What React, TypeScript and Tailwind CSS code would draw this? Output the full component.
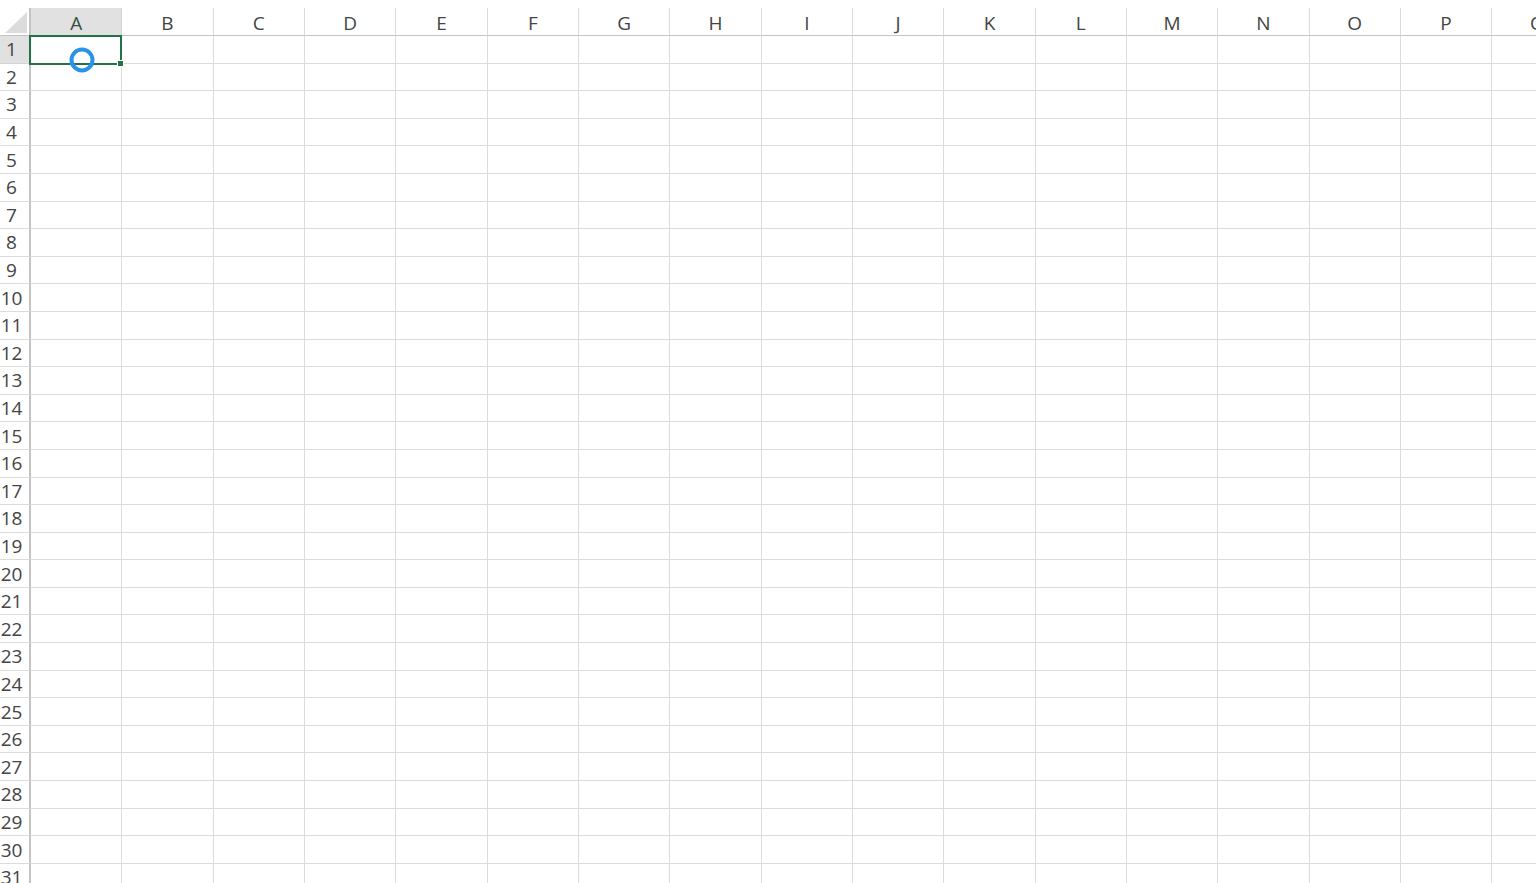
const COLS = "ABCDEFGHIJKLMNOPQ".split("");
const ROWS = Array.from({ length: 32 }, (_, i) => i + 1);

function CornerCell() {
  return (
    <div className="relative h-[28px] border-r-2 border-b border-[#c4c4c4] bg-white">
      <svg className="absolute left-0 top-0" width="29" height="27" viewBox="0 0 29 27">
        <polygon points="5,25 27,4 27,25" fill="#dcdcdc" />
      </svg>
    </div>
  );
}

function ColHeader({ label, selected }: { label: string; selected: boolean }) {
  return (
    <div
      className={
        selected
          ? "flex h-[28px] items-center justify-center border-r border-b border-r-[#d4d4d4] border-b-[#c4c4c4] bg-[#e1e1e1] pt-[4px] text-[19px] text-[#35503f]"
          : "flex h-[28px] items-center justify-center border-r border-b border-r-[#dcdcdc] border-b-[#c4c4c4] bg-white pt-[4px] text-[19px] text-[#444444]"
      }
    >
      {label}
    </div>
  );
}

function RowHeader({ n, selected }: { n: number; selected: boolean }) {
  return (
    <div
      className={
        selected
          ? "flex h-[27.6px] items-center justify-center border-r-2 border-b border-r-[#c4c4c4] border-b-[#d4d4d4] bg-[#e1e1e1] pr-[6px] pt-[1px] text-[19px] leading-none text-[#444444]"
          : "flex h-[27.6px] items-center justify-center border-r-2 border-b border-r-[#c4c4c4] border-b-[#dcdcdc] bg-white pr-[6px] pt-[1px] text-[19px] leading-none text-[#444444]"
      }
    >
      {n}
    </div>
  );
}

function Cell({ active }: { active: boolean }) {
  return (
    <div className="relative h-[27.6px] border-r border-b border-[#dcdcdc]">
      {active && (
        <div className="absolute -left-[2px] -top-[1px] -right-[1px] -bottom-[2px] z-10 border-2 border-[#217346]">
          <div className="absolute -right-[4px] -bottom-[4px] h-[7px] w-[7px] border border-white bg-[#217346]" />
        </div>
      )}
    </div>
  );
}

export default function App() {
  return (
    <div
      className="relative h-screen w-screen overflow-hidden bg-white pt-[8px]"
      style={{ fontFamily: '"Open Sans", "Noto Sans", Arial, sans-serif' }}
    >
      <div className="grid w-max grid-cols-[31px_repeat(17,91.33px)]">
        <CornerCell />
        {COLS.map((c) => (
          <ColHeader key={c} label={c} selected={c === "A"} />
        ))}
        {ROWS.map((r) => (
          <div key={r} className="contents">
            <RowHeader n={r} selected={r === 1} />
            {COLS.map((c) => (
              <Cell key={c} active={r === 1 && c === "A"} />
            ))}
          </div>
        ))}
      </div>

      {/* busy cursor */}
      <svg className="absolute left-[69px] top-[47px] z-20" width="26" height="26" viewBox="0 0 26 26">
        <circle cx="13" cy="13" r="10.5" fill="none" stroke="#2a92e8" strokeWidth="4" />
      </svg>
    </div>
  );
}
